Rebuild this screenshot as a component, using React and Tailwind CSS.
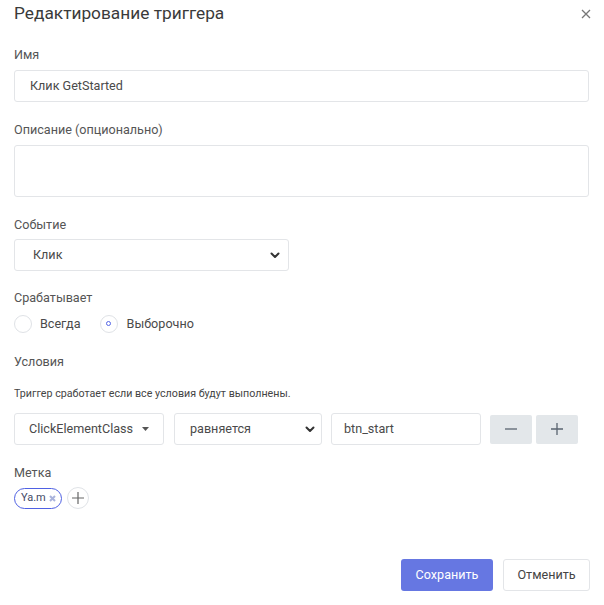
import React, { useState } from 'react';

const Label = ({ children, className = '' }) => (
  <div className={`text-[12.6px] leading-[20px] text-[#555] ${className}`}>{children}</div>
);

const Chevron = () => (
  <svg width="10" height="7" viewBox="0 0 10 7" fill="none" stroke="#333" strokeWidth="2" strokeLinecap="round" strokeLinejoin="round">
    <path d="M1.5 1.5L5 5L8.5 1.5" />
  </svg>
);

const TriggerEditor = () => {
  const [mode, setMode] = useState('select');

  return (
    <div
      className="w-[604px] h-[605px] bg-white pl-[14px] pr-[14px] flex flex-col"
      style={{ fontFamily: 'Roboto, "Noto Sans", sans-serif' }}
    >
      <div className="h-[28px] flex items-center justify-between">
        <h2 className="text-[17.3px] text-[#3a3a3a] font-normal">Редактирование триггера</h2>
        <button className="mr-[-1px] text-[#777]">
          <svg width="10" height="10" viewBox="0 0 10 10" stroke="currentColor" strokeWidth="1.3">
            <path d="M1 1L9 9M9 1L1 9" />
          </svg>
        </button>
      </div>

      <Label className="mt-[17px]">Имя</Label>
      <div className="mt-[5px] mr-[1px] h-[32px] border border-[#e3e5e8] rounded-[3px] flex items-center px-[15px] text-[12.6px] text-[#4a4a4a]">
        Клик GetStarted
      </div>

      <Label className="mt-[18px]">Описание (опционально)</Label>
      <div className="mt-[5px] mr-[1px] h-[52px] border border-[#e3e5e8] rounded-[3px]" />

      <Label className="mt-[18px]">Событие</Label>
      <div className="mt-[4px] w-[275px] h-[32px] border border-[#e3e5e8] rounded-[3px] flex items-center justify-between pl-[18px] pr-[8px] text-[12.6px] text-[#4a4a4a]">
        <span>Клик</span>
        <Chevron />
      </div>

      <Label className="mt-[17px]">Срабатывает</Label>
      <div className="mt-[6px] h-[20px] flex items-center text-[12.6px] text-[#4a4a4a]">
        <button onClick={() => setMode('always')} className="flex items-center">
          <span className="w-[18px] h-[18px] rounded-full border border-[#dfe2e6] flex items-center justify-center">
            {mode === 'always' && <span className="w-[5px] h-[5px] rounded-full border border-[#5466e6]" />}
          </span>
          <span className="ml-[8px]">Всегда</span>
        </button>
        <button onClick={() => setMode('select')} className="flex items-center ml-[19px]">
          <span className="w-[18px] h-[18px] rounded-full border border-[#dfe2e6] flex items-center justify-center">
            {mode === 'select' && <span className="w-[5px] h-[5px] rounded-full border border-[#5466e6]" />}
          </span>
          <span className="ml-[9px]">Выборочно</span>
        </button>
      </div>

      <Label className="mt-[18px]">Условия</Label>
      <div className="mt-[14px] text-[10.7px] leading-[16px] text-[#444]">
        Триггер сработает если все условия будут выполнены.
      </div>

      <div className="mt-[11px] flex items-center text-[12.6px] text-[#4a4a4a]">
        <div className="w-[150px] h-[32px] border border-[#e3e5e8] rounded-[3px] flex items-center pl-[14px]">
          <span>ClickElementClass</span>
          <svg className="ml-[9px]" width="7" height="4" viewBox="0 0 7 4" fill="#555">
            <path d="M0 0H7L3.5 4Z" />
          </svg>
        </div>
        <div className="ml-[10px] w-[148px] h-[32px] border border-[#e3e5e8] rounded-[3px] flex items-center justify-between pl-[15px] pr-[6px]">
          <span>равняется</span>
          <Chevron />
        </div>
        <div className="ml-[9px] w-[150px] h-[32px] border border-[#e3e5e8] rounded-[3px] flex items-center pl-[12px]">
          btn_start
        </div>
        <button className="ml-[9px] w-[42px] h-[29px] bg-[#e3e7ea] rounded-[2px] flex items-center justify-center text-[#5a6470]">
          <svg width="12" height="2" viewBox="0 0 12 2" stroke="currentColor" strokeWidth="1.3">
            <path d="M0 1H12" />
          </svg>
        </button>
        <button className="ml-[4px] w-[42px] h-[29px] bg-[#e3e7ea] rounded-[2px] flex items-center justify-center text-[#5a6470]">
          <svg width="12" height="12" viewBox="0 0 12 12" stroke="currentColor" strokeWidth="1.3">
            <path d="M0 6H12M6 0V12" />
          </svg>
        </button>
      </div>

      <Label className="mt-[18px]">Метка</Label>
      <div className="mt-[4px] flex items-center">
        <span className="h-[21px] pl-[6px] pr-[5px] rounded-full border-[1.5px] border-[#4f61e3] flex items-center text-[11px] text-[#3f4a66]">
          Ya.m
          <svg className="ml-[3px]" width="7" height="7" viewBox="0 0 7 7" stroke="#a9b3dc" strokeWidth="2">
            <path d="M1 1L6 6M6 1L1 6" />
          </svg>
        </span>
        <button className="ml-[5px] w-[22px] h-[22px] rounded-full border border-[#e0e3e7] flex items-center justify-center text-[#666]">
          <svg width="12" height="12" viewBox="0 0 12 12" stroke="currentColor" strokeWidth="1.2">
            <path d="M0 6H12M6 0V12" />
          </svg>
        </button>
      </div>

      <div className="mt-[50px] flex justify-end">
        <button className="w-[92px] h-[32px] bg-[#6677e2] text-white text-[12.6px] rounded-[3px]">Сохранить</button>
        <button className="ml-[10px] w-[87px] h-[32px] border border-[#e3e5e8] text-[#444] text-[12.6px] rounded-[3px]">
          Отменить
        </button>
      </div>
    </div>
  );
};

export default function App() {
  return <TriggerEditor />;
}
